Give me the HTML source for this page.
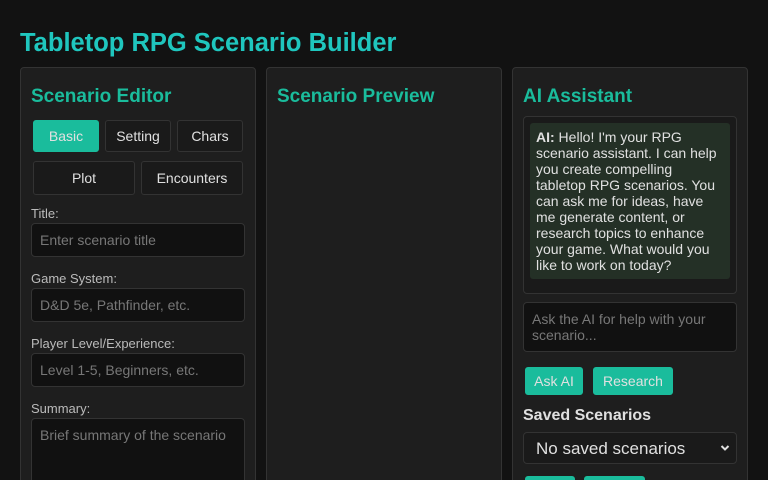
<!DOCTYPE html>
<html style="width:768px;height:480px;overflow:hidden"><head><style>
*{box-sizing:border-box;margin:0;padding:0}
body{width:768px;height:480px;overflow:hidden;background:#121212;font-family:"Liberation Sans",sans-serif;color:#e0e0e0;position:relative}
.a{position:absolute}
h1{position:absolute;left:20px;top:27px;font-size:25.5px;color:#1fc6be;font-weight:bold;line-height:32px}
.panel{position:absolute;top:67px;height:430px;width:236px;background:#1e1e1e;border:1px solid #333;border-radius:4px}
h2{position:absolute;font-size:19px;color:#1abc9c;font-weight:bold;top:86px;line-height:22px}
.btn{position:absolute;border:1px solid #333;background:#1a1a1a;border-radius:3px;color:#e0e0e0;font-size:14px;display:flex;align-items:center;justify-content:center}
.btn.on{background:#1abc9c;border-color:#1abc9c}
.lbl{position:absolute;left:31px;font-size:13px;color:#bbb}
.inp{position:absolute;left:31px;width:214px;height:34px;background:#111;border:1px solid #333;border-radius:4px;color:#777;font-size:14px;padding:8px 8px}
</style></head><body>
<h1>Tabletop RPG Scenario Builder</h1>
<div class="panel" style="left:20px"></div>
<div class="panel" style="left:266px"></div>
<div class="panel" style="left:512px"></div>
<h2 style="left:31px">Scenario Editor</h2>
<h2 style="left:277px">Scenario Preview</h2>
<h2 style="left:523px">AI Assistant</h2>
<div class="btn on" style="left:33px;top:120px;width:66px;height:32px">Basic</div>
<div class="btn" style="left:105px;top:120px;width:66px;height:32px">Setting</div>
<div class="btn" style="left:177px;top:120px;width:66px;height:32px">Chars</div>
<div class="btn" style="left:33px;top:161px;width:102px;height:34px">Plot</div>
<div class="btn" style="left:141px;top:161px;width:102px;height:34px">Encounters</div>
<div class="lbl" style="top:206px">Title:</div>
<div class="inp" style="top:223px">Enter scenario title</div>
<div class="lbl" style="top:271px">Game System:</div>
<div class="inp" style="top:288px">D&amp;D 5e, Pathfinder, etc.</div>
<div class="lbl" style="top:336px">Player Level/Experience:</div>
<div class="inp" style="top:353px">Level 1-5, Beginners, etc.</div>
<div class="lbl" style="top:401px">Summary:</div>
<div class="inp" style="top:418px;height:70px">Brief summary of the scenario</div>
<div class="a" style="left:523px;top:116px;width:214px;height:178px;border:1px solid #333;border-radius:4px;background:#1a1a1a"></div>
<div class="a" style="left:530px;top:123px;width:200px;height:156px;background:#243026;border-radius:3px;padding:6px 6px;font-size:14px;line-height:16px;color:#e0e0e0">
<b>AI:</b> Hello! I'm your RPG scenario assistant. I can help you create compelling tabletop RPG scenarios. You can ask me for ideas, have me generate content, or research topics to enhance your game. What would you like to work on today?</div>
<div class="a" style="left:523px;top:302px;width:214px;height:50px;background:#111;border:1px solid #333;border-radius:4px;padding:8px 8px;font-size:14px;line-height:16px;color:#777">Ask the AI for help with your scenario...</div>
<div class="btn on" style="left:525px;top:367px;width:58px;height:28px">Ask AI</div>
<div class="btn on" style="left:593px;top:367px;width:80px;height:28px">Research</div>
<div class="a" style="left:523px;top:407px;font-size:16px;font-weight:bold;color:#e0e0e0">Saved Scenarios</div>
<div class="a" style="left:523px;top:432px;width:214px;height:32px;background:#1a1a1a;border:1px solid #333;border-radius:4px;font-size:17px;padding:6px 12px;color:#e0e0e0">No saved scenarios<svg style="position:absolute;right:6px;top:11px" width="10" height="8" viewBox="0 0 10 8"><path d="M1.5 2 L5 5.5 L8.5 2" stroke="#e0e0e0" stroke-width="2" fill="none"/></svg></div>
<div class="btn on" style="left:525px;top:476px;width:50px;height:28px"></div>
<div class="btn on" style="left:584px;top:476px;width:61px;height:28px"></div>
</body></html>
